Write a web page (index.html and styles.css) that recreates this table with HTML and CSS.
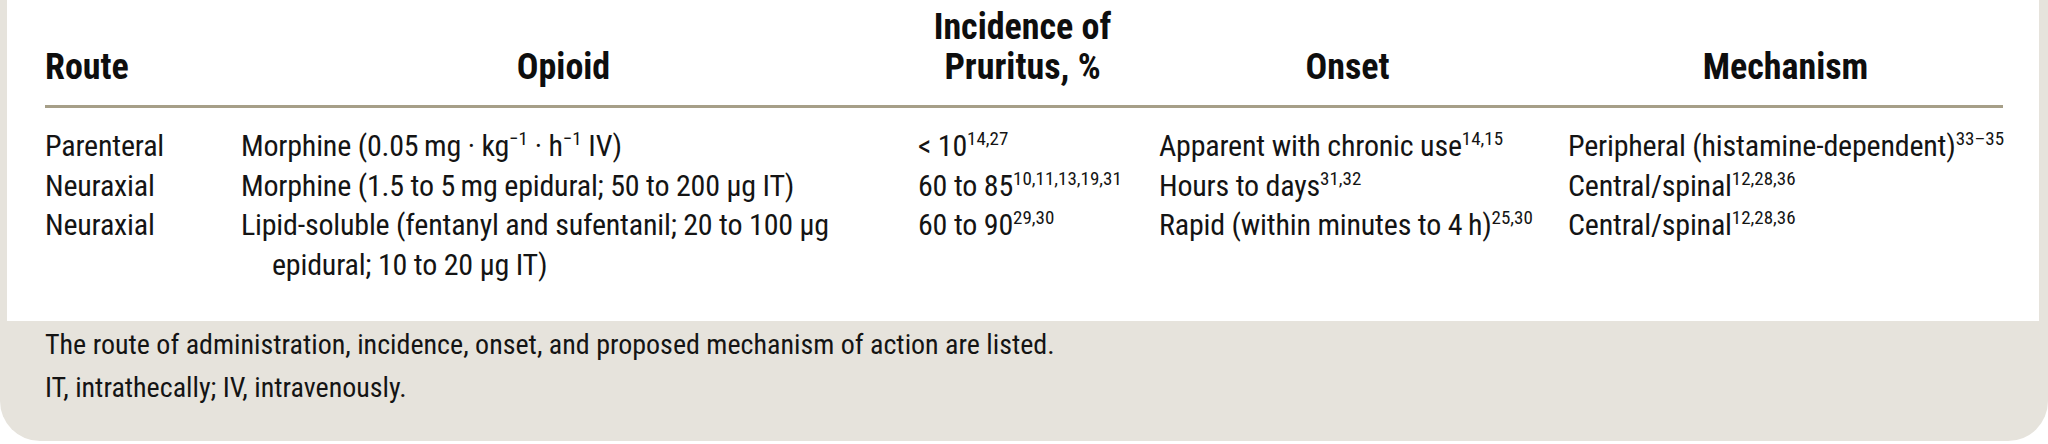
FILE: index.html
```html
<!DOCTYPE html>
<html lang="en">
<head>
<meta charset="utf-8">
<title>Opioid-induced pruritus</title>
<link rel="stylesheet" href="styles.css">
</head>
<body>
<div class="frame">
  <div class="panel">
    <table class="tbl">
      <colgroup>
        <col class="c-route">
        <col class="c-opioid">
        <col class="c-inc">
        <col class="c-onset">
        <col class="c-mech">
      </colgroup>
      <thead>
        <tr>
          <th class="left">Route</th>
          <th>Opioid</th>
          <th>Incidence of<br>Pruritus, %</th>
          <th>Onset</th>
          <th>Mechanism</th>
        </tr>
      </thead>
      <tbody>
        <tr class="first">
          <td>Parenteral</td>
          <td class="hang">Morphine (0.05&#8201;mg · kg<sup>−1</sup> · h<sup>−1</sup> IV)</td>
          <td>&lt; 10<sup>14,27</sup></td>
          <td>Apparent with chronic use<sup>14,15</sup></td>
          <td>Peripheral (histamine-dependent)<sup>33–35</sup></td>
        </tr>
        <tr>
          <td>Neuraxial</td>
          <td class="hang">Morphine (1.5 to 5&#8201;mg epidural; 50 to 200 µg IT)</td>
          <td>60 to 85<sup>10,11,13,19,31</sup></td>
          <td>Hours to days<sup>31,32</sup></td>
          <td>Central/spinal<sup>12,28,36</sup></td>
        </tr>
        <tr>
          <td>Neuraxial</td>
          <td class="hang">Lipid-soluble (fentanyl and sufentanil; 20 to 100 µg epidural; 10 to 20 µg IT)</td>
          <td>60 to 90<sup>29,30</sup></td>
          <td>Rapid (within minutes to 4&#8201;h)<sup>25,30</sup></td>
          <td>Central/spinal<sup>12,28,36</sup></td>
        </tr>
      </tbody>
    </table>
  </div>
  <div class="foot">
    <p>The route of administration, incidence, onset, and proposed mechanism of action are listed.</p>
    <p>IT, intrathecally; IV, intravenously.</p>
  </div>
</div>
</body>
</html>
```

FILE: styles.css
```css
html, body {
  margin: 0;
  padding: 0;
  background: #ffffff;
}

body {
  font-family: "Roboto Condensed", "Noto Sans", "Liberation Sans Narrow", "DejaVu Sans Condensed", sans-serif;
  font-stretch: condensed;
  color: #141414;
}

.frame {
  box-sizing: border-box;
  min-height: 441px;
  background: #e6e3dc;
  border-radius: 0 0 40px 40px;
  padding: 0 9px 0 7px;
  display: flex;
  flex-direction: column;
}

.panel {
  box-sizing: border-box;
  min-height: 321px;
  flex: none;
  background: #ffffff;
  padding: 7px 36px 36px 38px;
}

.tbl {
  border-collapse: collapse;
  table-layout: fixed;
  width: 1958px;
}

.c-route { width: 196px; }
.c-opioid { width: 677px; }
.c-inc { width: 241px; }
.c-onset { width: 409px; }
.c-mech { width: 435px; }

.tbl th {
  font-weight: bold;
  font-size: 36px;
  line-height: 40px;
  text-align: center;
  vertical-align: bottom;
  white-space: nowrap;
  padding: 0 32px 18px 0;
  border-bottom: 3px solid #a69f88;
  color: #0e0e0e;
}

.tbl th.left {
  text-align: left;
}

.tbl td {
  font-size: 30px;
  line-height: 39.5px;
  letter-spacing: -0.2px;
  vertical-align: top;
  text-align: left;
  white-space: nowrap;
  padding: 0 32px 0 0;
}

.tbl th:last-child,
.tbl td:last-child {
  padding-right: 0;
}

.tbl tr.first td {
  padding-top: 18px;
}

.tbl td.hang {
  white-space: normal;
  padding-left: 31px;
  text-indent: -31px;
}

.tbl sup {
  font-size: 19px;
  letter-spacing: 0;
  line-height: 0;
  vertical-align: 11px;
}

.foot {
  padding: 2px 38px 32px 38px;
}

.foot p {
  margin: 0;
  font-size: 28px;
  line-height: 43px;
}
```
